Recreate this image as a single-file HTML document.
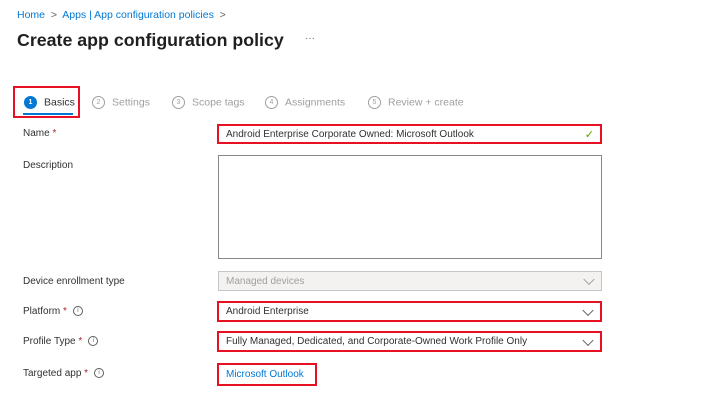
<!DOCTYPE html>
<html><head><style>
body{margin:0;width:721px;height:408px;background:#fff;font-family:"Liberation Sans",sans-serif;position:relative;overflow:hidden;color:#323130}
.a{position:absolute;white-space:nowrap}
.lbl{font-size:10px;color:#323130}
.box{position:absolute;box-sizing:border-box;border:1px solid #8a8886;background:#fff;font-size:10px;padding-left:7px;display:flex;align-items:center}
.red{border:2px solid #e81123}
.chev{position:absolute;right:8px;top:50%;width:7px;height:7px;border-right:1px solid #605e5c;border-bottom:1px solid #605e5c;transform:translateY(-70%) rotate(45deg)}
.info{display:inline-block;width:8px;height:8px;border:1px solid #605e5c;border-radius:50%;font-size:6px;text-align:center;line-height:8px;margin-left:6px;vertical-align:middle;color:#605e5c}
.req{color:#a4262c}
.step{display:inline-block;width:11px;height:11px;border:1px solid #a19f9d;border-radius:50%;font-size:7px;text-align:center;line-height:11px;color:#a19f9d;vertical-align:middle;margin-right:7px}
.tab{font-size:10.5px;color:#a19f9d}
</style></head><body>
<div class="a" style="left:17px;top:9px;font-size:10.5px;color:#0078d4">Home <span style="color:#605e5c">&nbsp;&gt;&nbsp;</span> Apps | App configuration policies <span style="color:#605e5c">&nbsp;&gt;</span></div>
<div class="a" style="left:17px;top:30px;font-size:17.8px;color:#201f1e;font-weight:600">Create app configuration policy</div>
<div class="a" style="left:305px;top:33px;font-size:10px;color:#605e5c">···</div>

<div class="a" style="left:13px;top:86px;width:67px;height:32px;box-sizing:border-box;border:2px solid #e81123"></div>
<div class="a" style="left:23px;top:113px;width:50px;height:2px;background:#0078d4"></div>
<div class="a tab" style="left:24px;top:96px;color:#323130"><span class="step" style="background:#0078d4;border-color:#0078d4;color:#fff;font-weight:bold">1</span>Basics</div>
<div class="a tab" style="left:92px;top:96px"><span class="step">2</span>Settings</div>
<div class="a tab" style="left:172px;top:96px"><span class="step">3</span>Scope tags</div>
<div class="a tab" style="left:265px;top:96px"><span class="step">4</span>Assignments</div>
<div class="a tab" style="left:368px;top:96px"><span class="step">5</span>Review + create</div>

<div class="a lbl" style="left:23px;top:128px">Name <span class="req">*</span></div>
<div class="box red" style="left:217px;top:124px;width:385px;height:20px">Android Enterprise Corporate Owned: Microsoft Outlook<span style="position:absolute;right:6px;color:#57a300;font-size:11px">✓</span></div>

<div class="a lbl" style="left:23px;top:160px">Description</div>
<div class="box" style="left:218px;top:155px;width:384px;height:104px"></div>

<div class="a lbl" style="left:23px;top:276px">Device enrollment type</div>
<div class="box" style="left:218px;top:271px;width:384px;height:20px;background:#f3f2f1;border-color:#c8c6c4;color:#a19f9d">Managed devices<span class="chev" style="border-color:#a19f9d"></span></div>

<div class="a lbl" style="left:23px;top:306px">Platform <span class="req">*</span><span class="info">i</span></div>
<div class="box red" style="left:217px;top:301px;width:385px;height:21px">Android Enterprise<span class="chev"></span></div>

<div class="a lbl" style="left:23px;top:336px">Profile Type <span class="req">*</span><span class="info">i</span></div>
<div class="box red" style="left:217px;top:331px;width:385px;height:21px">Fully Managed, Dedicated, and Corporate-Owned Work Profile Only<span class="chev"></span></div>

<div class="a lbl" style="left:23px;top:368px">Targeted app <span class="req">*</span><span class="info">i</span></div>
<div class="box red" style="left:217px;top:363px;width:100px;height:23px;color:#0078d4">Microsoft Outlook</div>
</body></html>
